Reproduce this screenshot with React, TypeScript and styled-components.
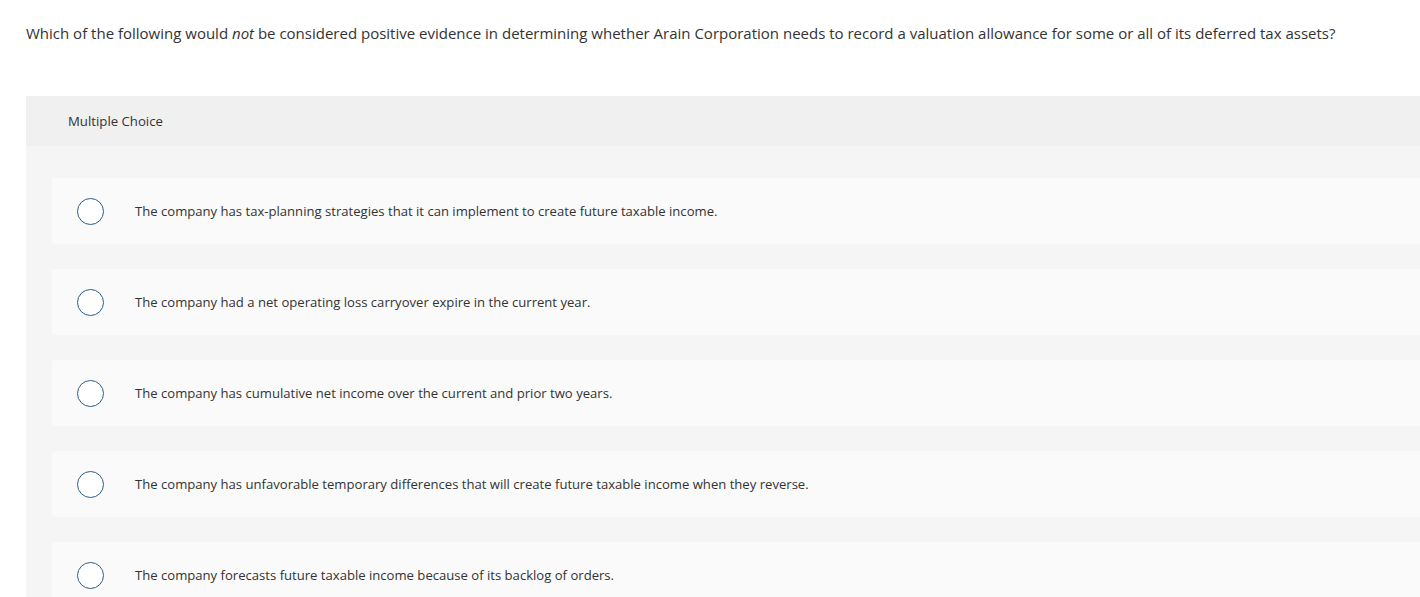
import { createGlobalStyle } from "styled-components";
import styled from "styled-components";

const GlobalStyle = createGlobalStyle`
    html, body {
        margin: 0;
        padding: 0;
        background: #ffffff;
        overflow: hidden;
    }
    body {
        font-family: "Open Sans", Lato, Arial, sans-serif;
        color: #333333;
    }
`;

const Page = styled.div`
    width: 1420px;
    height: 597px;
    overflow: hidden;
    padding: 0 0 0 26px;
    box-sizing: border-box;
`;

const Question = styled.p`
    margin: 0;
    padding-top: 23px;
    height: 96px;
    box-sizing: border-box;
    font-size: 15px;
    line-height: 20px;
    color: #333333;
    white-space: nowrap;

    em {
        font-style: italic;
    }
`;

const Panel = styled.section`
    width: 1420px;
    background-color: #f5f5f5;
`;

const PanelHeader = styled.header`
    height: 50px;
    display: flex;
    align-items: center;
    padding-left: 42px;
    background-color: #f0f0f0;
    font-size: 13.2px;
    color: #333333;
`;

const ChoiceList = styled.div`
    display: flex;
    flex-direction: column;
    gap: 25px;
    padding: 32px 0 25px 26px;
`;

const Choice = styled.label`
    height: 66px;
    display: flex;
    align-items: center;
    background-color: #fafafa;
    border-radius: 3px;
    cursor: pointer;
`;

const Radio = styled.span`
    width: 25px;
    height: 25px;
    margin-left: 25px;
    border: 1.5px solid #2d5d8a;
    border-radius: 50%;
    background: #ffffff;
    flex-shrink: 0;
`;

const ChoiceText = styled.span`
    margin-left: 31px;
    font-size: 13.1px;
    color: #333333;
    white-space: nowrap;
`;

const choices = [
    "The company has tax-planning strategies that it can implement to create future taxable income.",
    "The company had a net operating loss carryover expire in the current year.",
    "The company has cumulative net income over the current and prior two years.",
    "The company has unfavorable temporary differences that will create future taxable income when they reverse.",
    "The company forecasts future taxable income because of its backlog of orders.",
];

export default function App() {
    return (
        <>
            <GlobalStyle />
            <Page>
                <Question>
                    Which of the following would <em>not</em> be considered
                    positive evidence in determining whether Arain Corporation
                    needs to record a valuation allowance for some or all of its
                    deferred tax assets?
                </Question>
                <Panel>
                    <PanelHeader>Multiple Choice</PanelHeader>
                    <ChoiceList>
                        {choices.map((c) => (
                            <Choice key={c}>
                                <Radio />
                                <ChoiceText>{c}</ChoiceText>
                            </Choice>
                        ))}
                    </ChoiceList>
                </Panel>
            </Page>
        </>
    );
}
